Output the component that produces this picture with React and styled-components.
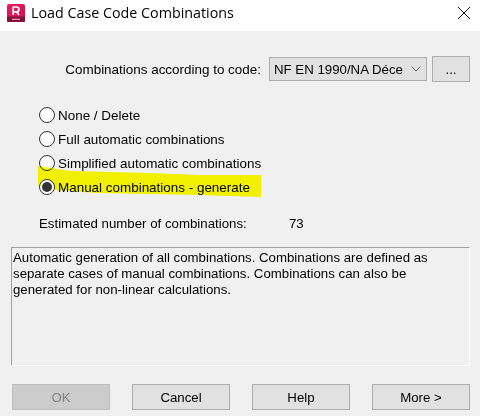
import styled, { createGlobalStyle } from "styled-components";

const GlobalStyle = createGlobalStyle`
  html, body {
    margin: 0;
    padding: 0;
    background: #f0f0f0;
  }
  * {
    box-sizing: border-box;
  }
`;

const Dialog = styled.div`
  width: 480px;
  height: 416px;
  display: flex;
  flex-direction: column;
  overflow: hidden;
  background: #f0f0f0;
  color: #000;
  font-family: "Liberation Sans", Arial, sans-serif;
  font-size: 13.25px;
`;

const TitleBar = styled.header`
  height: 31px;
  flex: none;
  display: flex;
  align-items: center;
  background: #fff;
  padding: 0 10px 5px 7px;
`;

const Title = styled.h1`
  margin: 0 0 1px 6px;
  flex: 1;
  font-family: "Open Sans", "Noto Sans", sans-serif;
  font-size: 14.3px;
  font-weight: 400;
  white-space: nowrap;
`;

const CloseSvg = styled.svg`
  margin-bottom: 1px;
`;

const Body = styled.main`
  flex: 1;
  display: flex;
  flex-direction: column;
  padding: 25px 10px 6px 11px;
`;

const CodeRow = styled.div`
  display: flex;
  align-items: center;
  justify-content: flex-end;
  height: 26px;
`;

const CodeLabel = styled.span`
  margin-right: 8px;
  font-size: 13.45px;
`;

const Combo = styled.div`
  width: 158px;
  height: 24px;
  display: flex;
  align-items: center;
  justify-content: space-between;
  padding: 0 5px 0 4px;
  background: #e1e1e1;
  border: 1px solid #adadad;
  margin-right: 5px;
  white-space: nowrap;
`;

const Button = styled.button`
  width: ${(p) => p.$width || 98}px;
  height: ${(p) => p.$height || 26}px;
  padding: 0;
  background: #e1e1e1;
  border: 1px solid #adadad;
  font: inherit;
  color: ${(p) => (p.disabled ? "#838383" : "#000")};
  ${(p) => p.disabled && "background: #cccccc; border-color: #bfbfbf;"}
`;

const RadioGroup = styled.div`
  position: relative;
  display: flex;
  flex-direction: column;
  gap: 4px;
  margin: 23px 0 0 28px;
  font-size: 13.45px;
`;

const RadioRow = styled.label`
  height: 20px;
  display: flex;
  align-items: center;
  gap: 3px;
  white-space: nowrap;
`;

const RadioCircle = styled.span`
  width: 16px;
  height: 16px;
  flex: none;
  display: flex;
  align-items: center;
  justify-content: center;
  border-radius: 50%;
  background: #fff;
  border: 1px solid #333;
  position: relative;
  z-index: ${(p) => (p.$checked ? 1 : "auto")};

  &::after {
    content: "";
    width: 10px;
    height: 10px;
    border-radius: 50%;
    background: ${(p) => (p.$checked ? "#333" : "transparent")};
  }
`;

const Highlight = styled.svg`
  position: absolute;
  left: -2px;
  top: 60px;
  width: 226px;
  height: 33px;
  mix-blend-mode: multiply;
  pointer-events: none;
`;

const EstimateRow = styled.div`
  display: flex;
  margin: 17px 0 0 28px;
  height: 18px;
  align-items: center;
`;

const EstimateLabel = styled.span`
  width: 250px;
`;

const Description = styled.div`
  height: 119px;
  margin-top: 15px;
  padding: 2px 1px;
  line-height: 16px;
  border: 1px solid;
  border-color: #a0a0a0 #fff #fff #a0a0a0;
`;

const ButtonRow = styled.footer`
  display: flex;
  justify-content: space-between;
  margin: 18px 0 0 1px;
`;

const options = [
  "None / Delete",
  "Full automatic combinations",
  "Simplified automatic combinations",
  "Manual combinations - generate",
];

const AppLogo = () => (
  <svg width="18" height="18" viewBox="0 0 18 18">
    <defs>
      <linearGradient id="logoFill" x1="0" y1="0" x2="1" y2="1">
        <stop offset="0" stopColor="#f0175f" />
        <stop offset="1" stopColor="#c9144e" />
      </linearGradient>
    </defs>
    <rect width="18" height="18" rx="2" fill="url(#logoFill)" />
    <rect y="12.5" width="18" height="5.5" rx="1" fill="#86103a" />
    <path d="M6.2 2.5v8.5M6.2 3h3.3a2.4 2.4 0 0 1 0 4.8H6.2M9.6 7.8 12 11" fill="none" stroke="#fff" strokeWidth="1.7" />
    <path d="M5 15.3h8" stroke="#e6a3b8" strokeWidth="1.2" />
  </svg>
);

const CloseIcon = () => (
  <CloseSvg width="12" height="12" viewBox="0 0 12 12">
    <path d="M0 0l12 12M12 0L0 12" stroke="#111" strokeWidth="1" fill="none" />
  </CloseSvg>
);

const Chevron = () => (
  <svg width="10" height="6" viewBox="0 0 10 6">
    <path d="M.5.5 5 5 9.5.5" stroke="#666" strokeWidth="1" fill="none" />
  </svg>
);

export default function App() {
  return (
    <Dialog>
      <GlobalStyle />
      <TitleBar>
        <AppLogo />
        <Title>Load Case Code Combinations</Title>
        <CloseIcon />
      </TitleBar>
      <Body>
        <CodeRow>
          <CodeLabel>Combinations according to code:</CodeLabel>
          <Combo>
            NF EN 1990/NA Déce
            <Chevron />
          </Combo>
          <Button $width={38}>...</Button>
        </CodeRow>
        <RadioGroup>
          {options.map((label, i) => (
            <RadioRow key={label}>
              <RadioCircle $checked={i === 3} />
              {label}
            </RadioRow>
          ))}
          <Highlight viewBox="0 0 226 33">
            <path d="M1 1 L33 6 L113 8 L163 10 L224 10 L224 32 L163 30 L61 28 L18 25 L1 21 Z" fill="#ffff00" />
          </Highlight>
        </RadioGroup>
        <EstimateRow>
          <EstimateLabel>Estimated number of combinations:</EstimateLabel>
          73
        </EstimateRow>
        <Description>
          Automatic generation of all combinations. Combinations are defined as
          <br />
          separate cases of manual combinations. Combinations can also be
          <br />
          generated for non-linear calculations.
        </Description>
        <ButtonRow>
          <Button disabled>OK</Button>
          <Button>Cancel</Button>
          <Button>Help</Button>
          <Button>More &gt;</Button>
        </ButtonRow>
      </Body>
    </Dialog>
  );
}
